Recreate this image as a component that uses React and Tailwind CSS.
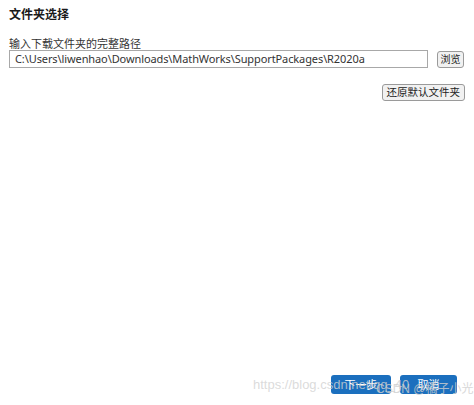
import React from 'react';

const font = { fontFamily: '"Noto Sans", "Noto Sans CJK SC", sans-serif' };

const App = () => {
  return (
    <div className="relative w-[474px] h-[405px] bg-white text-[#262626] overflow-hidden" style={font}>
      <div className="flex flex-col h-full px-[9px] pt-[6px] pb-[11px]">
        <h1 className="text-[12px] font-bold leading-[18px] text-[#1a1a1a]">文件夹选择</h1>

        <label className="mt-[13px] text-[11px] leading-[13px] text-[#333]">输入下载文件夹的完整路径</label>
        <div className="flex items-center mt-[0px]">
          <div className="w-[419px] h-[18px] border border-[#a8a8a8] bg-white pl-[5px] flex items-center text-[11px] text-[#333] tracking-[-0.1px] whitespace-nowrap overflow-hidden">
            C:\Users\liwenhao\Downloads\MathWorks\SupportPackages\R2020a
          </div>
          <button className="ml-[9px] w-[27px] h-[17px] rounded-[3px] border border-[#9a9a9a] bg-[#f1f1f1] text-[10px] leading-none text-[#222]">
            浏览
          </button>
        </div>

        <div className="flex justify-end mt-[16px]">
          <button className="h-[17px] px-[4px] rounded-[3px] border border-[#9a9a9a] bg-[#f1f1f1] text-[10.5px] leading-none text-[#222]">
            还原默认文件夹
          </button>
        </div>

        <div className="flex-1" />

        <div className="flex justify-end gap-[9px] pr-[8px]">
          <button className="w-[60px] h-[19px] rounded-[3px] bg-[#1b6fbe] text-white text-[11px] leading-none">下一步</button>
          <button className="w-[57px] h-[19px] rounded-[3px] bg-[#1b6fbe] text-white text-[11px] leading-none">取消</button>
        </div>
      </div>

      <div className="absolute left-[253px] top-[375px] text-[13px] text-[#d2d2d2]/80 whitespace-nowrap pointer-events-none" style={{ fontFamily: '"Liberation Sans", "Noto Sans CJK SC", sans-serif' }}>
        https://blog.csdn.net/qq_40
      </div>
      <div className="absolute left-[376px] top-[380px] text-[12px] text-[#cfcfcf] whitespace-nowrap pointer-events-none opacity-80" style={{ fontFamily: '"Liberation Sans", "Noto Sans CJK SC", sans-serif' }}>
        CSDN @橘子小光
      </div>
    </div>
  );
};

export default App;
